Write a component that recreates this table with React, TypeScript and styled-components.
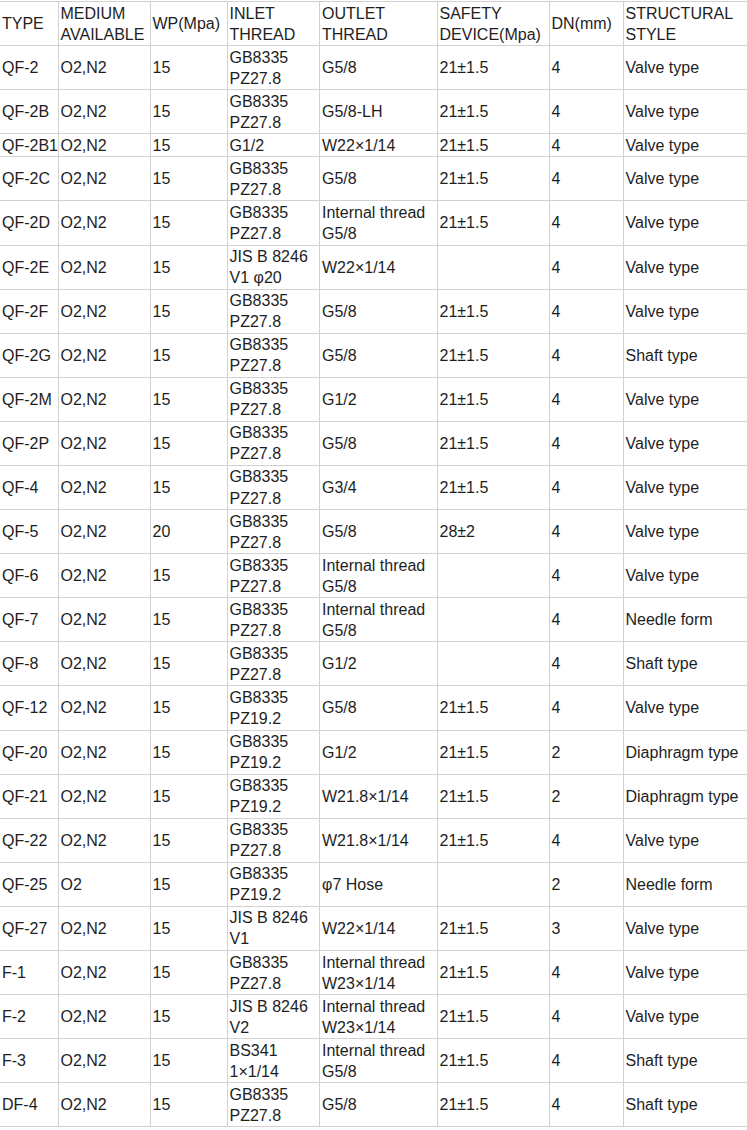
import { createGlobalStyle, styled } from "styled-components";

type Row = [string, string, string, string, string, string, string, string];

const header: Row = [
	"TYPE",
	"MEDIUM AVAILABLE",
	"WP(Mpa)",
	"INLET THREAD",
	"OUTLET THREAD",
	"SAFETY DEVICE(Mpa)",
	"DN(mm)",
	"STRUCTURAL STYLE",
];

const gb278 = "GB8335 PZ27.8";
const gb192 = "GB8335 PZ19.2";

const rows: Row[] = [
	["QF-2", "O2,N2", "15", gb278, "G5/8", "21±1.5", "4", "Valve type"],
	["QF-2B", "O2,N2", "15", gb278, "G5/8-LH", "21±1.5", "4", "Valve type"],
	["QF-2B1", "O2,N2", "15", "G1/2", "W22×1/14", "21±1.5", "4", "Valve type"],
	["QF-2C", "O2,N2", "15", gb278, "G5/8", "21±1.5", "4", "Valve type"],
	["QF-2D", "O2,N2", "15", gb278, "Internal thread G5/8", "21±1.5", "4", "Valve type"],
	["QF-2E", "O2,N2", "15", "JIS B 8246 V1 φ20", "W22×1/14", "", "4", "Valve type"],
	["QF-2F", "O2,N2", "15", gb278, "G5/8", "21±1.5", "4", "Valve type"],
	["QF-2G", "O2,N2", "15", gb278, "G5/8", "21±1.5", "4", "Shaft type"],
	["QF-2M", "O2,N2", "15", gb278, "G1/2", "21±1.5", "4", "Valve type"],
	["QF-2P", "O2,N2", "15", gb278, "G5/8", "21±1.5", "4", "Valve type"],
	["QF-4", "O2,N2", "15", gb278, "G3/4", "21±1.5", "4", "Valve type"],
	["QF-5", "O2,N2", "20", gb278, "G5/8", "28±2", "4", "Valve type"],
	["QF-6", "O2,N2", "15", gb278, "Internal thread G5/8", "", "4", "Valve type"],
	["QF-7", "O2,N2", "15", gb278, "Internal thread G5/8", "", "4", "Needle form"],
	["QF-8", "O2,N2", "15", gb278, "G1/2", "", "4", "Shaft type"],
	["QF-12", "O2,N2", "15", gb192, "G5/8", "21±1.5", "4", "Valve type"],
	["QF-20", "O2,N2", "15", gb192, "G1/2", "21±1.5", "2", "Diaphragm type"],
	["QF-21", "O2,N2", "15", gb192, "W21.8×1/14", "21±1.5", "2", "Diaphragm type"],
	["QF-22", "O2,N2", "15", gb278, "W21.8×1/14", "21±1.5", "4", "Valve type"],
	["QF-25", "O2", "15", gb192, "φ7 Hose", "", "2", "Needle form"],
	["QF-27", "O2,N2", "15", "JIS B 8246 V1", "W22×1/14", "21±1.5", "3", "Valve type"],
	["F-1", "O2,N2", "15", gb278, "Internal thread W23×1/14", "21±1.5", "4", "Valve type"],
	["F-2", "O2,N2", "15", "JIS B 8246 V2", "Internal thread W23×1/14", "21±1.5", "4", "Valve type"],
	["F-3", "O2,N2", "15", "BS341 1×1/14", "Internal thread G5/8", "21±1.5", "4", "Shaft type"],
	["DF-4", "O2,N2", "15", gb278, "G5/8", "21±1.5", "4", "Shaft type"],
];

const widths = [58, 92, 77, 92.5, 117.5, 112, 74, 124];

const App = () => {
	return (
		<>
			<GlobalStyle />
			<Table>
				<colgroup>
					{widths.map((w, i) => (
						<col key={i} style={{ width: w }} />
					))}
				</colgroup>
				<tbody>
					<tr>
						{header.map((h, i) => (
							<Cell key={i}>{h}</Cell>
						))}
					</tr>
					{rows.map((r) => (
						<tr key={r[0]}>
							{r.map((c, i) => (
								<Cell key={i} $nowrap={i === 0}>
									{c}
								</Cell>
							))}
						</tr>
					))}
				</tbody>
			</Table>
		</>
	);
};

export default App;

const GlobalStyle = createGlobalStyle`
	body {
		margin: 0;
		background: #ffffff;
		font-family: "Liberation Sans", Arial, sans-serif;
		overflow-x: hidden;
	}
`;

const Table = styled.table`
	width: 747px;
	margin-top: 1px;
	table-layout: fixed;
	border-collapse: collapse;
	font-size: 16px;
	line-height: 21.05px;
	color: #1e1e1e;
`;

const Cell = styled.td<{ $nowrap?: boolean }>`
	border: 1px solid #d2d2d2;
	padding: 0.5px 0 0.5px 2px;
	vertical-align: middle;
	text-align: left;
	white-space: ${(p) => (p.$nowrap ? "nowrap" : "normal")};
	&:first-child {
		border-left: none;
	}
	&:last-child {
		border-right: none;
	}
`;
